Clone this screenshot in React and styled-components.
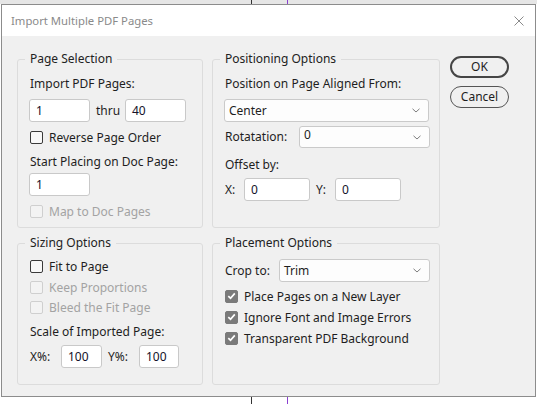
import React from "react";
import styled, { createGlobalStyle } from "styled-components";

const Global = createGlobalStyle`
  html, body {
    margin: 0;
    padding: 0;
  }
  body {
    width: 537px;
    height: 404px;
    overflow: hidden;
    font-family: "Noto Sans", "Open Sans", sans-serif;
    background:
      linear-gradient(#333, #333) 251px 0 / 1px 100% no-repeat,
      linear-gradient(#8a3fd1, #8a3fd1) 287px 0 / 1px 100% no-repeat,
      linear-gradient(#e6e6e6, #e6e6e6) 0 0 / 100% 4px no-repeat,
      #ffffff;
  }
`;

const Dialog = styled.div`
  margin: 4px 0 0 1px;
  width: 533px;
  height: 391px;
  border: 1px solid #8c8c8c;
  display: flex;
  flex-direction: column;
  background: #f0f0f0;
`;

const TitleBar = styled.div`
  height: 31px;
  flex: none;
  background: #fff;
  display: flex;
  align-items: center;
  justify-content: space-between;
  padding: 0 10px 0 9px;
  font-size: 11.3px;
  color: #8a8a8a;
`;

const Close = styled.button`
  border: none;
  background: none;
  padding: 0;
  width: 12px;
  height: 12px;
  display: flex;
  align-items: center;
  justify-content: center;
  svg {
    display: block;
  }
`;

const Body = styled.div`
  flex: 1;
  display: grid;
  grid-template-columns: 186px 228px 60px;
  grid-template-rows: 178px 151px;
  column-gap: 9px;
  row-gap: 6px;
  padding: 14px 0 0 15px;
`;

const Group = styled.fieldset`
  margin: 0;
  min-width: 0;
  padding: 0 12px;
  border: 1px solid #dcdcdc;
  border-radius: 3px;
  display: flex;
  flex-direction: column;
  font-size: 12px;
  color: #1e1e1e;
`;

const Legend = styled.legend`
  padding: 0 5px;
  margin-left: -5px;
  font-size: 12px;
  line-height: 18px;
  color: #222;
`;

const Label = styled.div`
  height: 18px;
  line-height: 18px;
  margin-top: ${(p) => p.$mt || 0}px;
  white-space: nowrap;
  color: ${(p) => (p.$disabled ? "#a3a3a3" : "#1e1e1e")};
`;

const Row = styled.div`
  display: flex;
  align-items: center;
  margin-top: ${(p) => p.$mt || 0}px;
`;

const RowLabel = styled.span`
  flex: none;
  width: ${(p) => p.$w}px;
  margin-left: ${(p) => p.$ml || 0}px;
  white-space: nowrap;
  line-height: 18px;
`;

const Input = styled.div`
  box-sizing: border-box;
  width: ${(p) => p.$w}px;
  height: 23px;
  margin-left: ${(p) => p.$ml || 0}px;
  flex: none;
  background: #fff;
  border: 1px solid #c9c9c9;
  border-radius: 3px;
  padding: 0 6px;
  line-height: 21px;
  color: #14122a;
`;

const Select = styled.div`
  box-sizing: border-box;
  width: ${(p) => p.$w}px;
  height: ${(p) => p.$h || 23}px;
  margin-left: ${(p) => p.$ml || 0}px;
  flex: none;
  background: #fdfdfd;
  border: 1px solid #cacaca;
  border-radius: 3px;
  padding: 0 8px 0 4px;
  display: flex;
  align-items: ${(p) => (p.$top ? "flex-start" : "center")};
  justify-content: space-between;
  line-height: ${(p) => (p.$top ? "15px" : "21px")};
  color: #1e1e1e;
  svg {
    align-self: center;
    flex: none;
  }
`;

const Check = styled.label`
  display: flex;
  align-items: center;
  gap: 6px;
  height: 20px;
  margin-top: ${(p) => p.$mt || 0}px;
  white-space: nowrap;
  color: ${(p) => (p.$disabled ? "#a3a3a3" : "#1e1e1e")};
`;

const Box = styled.span`
  box-sizing: border-box;
  width: 13px;
  height: 13px;
  flex: none;
  border-radius: 2px;
  border: 1px solid ${(p) => (p.$checked ? "#7a7a7a" : p.$disabled ? "#cfcfcf" : "#3a3a3a")};
  background: ${(p) => (p.$checked ? "#7a7a7a" : p.$disabled ? "#f3f3f3" : "#f8f8f8")};
  display: flex;
  align-items: center;
  justify-content: center;
`;

const Buttons = styled.div`
  grid-row: 1;
  grid-column: 3;
  margin: 6px 0 0 1px;
  display: flex;
  flex-direction: column;
  gap: 8px;
  align-items: flex-start;
`;

const Button = styled.button`
  box-sizing: border-box;
  width: 59px;
  height: 22px;
  padding: 0;
  border-radius: 11px;
  border: ${(p) => (p.$primary ? "2px solid #454545" : "1px solid #555")};
  background: #f0f0f0;
  font-family: inherit;
  font-size: 12px;
  color: #1e1e1e;
  line-height: 1;
`;

const Chevron = () => (
  <svg width="8" height="5" viewBox="0 0 8 5">
    <path d="M0.5 0.8 L4 4 L7.5 0.8" fill="none" stroke="#7d7d7d" strokeWidth="1" />
  </svg>
);

const Checkbox = ({ checked, disabled, mt, children }) => (
  <Check $disabled={disabled && !checked} $mt={mt}>
    <Box $checked={checked} $disabled={disabled}>
      {checked && (
        <svg width="9" height="8" viewBox="0 0 9 8">
          <path d="M1.3 4.2 L3.5 6.2 L7.8 1.4" fill="none" stroke="#fff" strokeWidth="1.7" />
        </svg>
      )}
    </Box>
    {children}
  </Check>
);

export default function App() {
  return (
    <>
      <Global />
      <Dialog>
        <TitleBar>
          <span>Import Multiple PDF Pages</span>
          <Close aria-label="Close">
            <svg width="10" height="10" viewBox="0 0 10 10">
              <path d="M0.5 0.5 L9.5 9.5 M9.5 0.5 L0.5 9.5" stroke="#8a8a8a" strokeWidth="1" />
            </svg>
          </Close>
        </TitleBar>
        <Body>
          <Group>
            <Legend>Page Selection</Legend>
            <Label $mt={7}>Import PDF Pages:</Label>
            <Row $mt={6}>
              <Input $w={61} $ml={-1}>1</Input>
              <RowLabel $w={35} $ml={6}>thru</RowLabel>
              <Input $w={61} $ml={-6}>40</Input>
            </Row>
            <Checkbox mt={5}>Reverse Page Order</Checkbox>
            <Label $mt={6}>Start Placing on Doc Page:</Label>
            <Row $mt={2}>
              <Input $w={61} $ml={-1}>1</Input>
            </Row>
            <Checkbox mt={5} disabled>Map to Doc Pages</Checkbox>
          </Group>

          <Group>
            <Legend>Positioning Options</Legend>
            <Label $mt={7}>Position on Page Aligned From:</Label>
            <Row $mt={6}>
              <Select $w={205} $ml={-1}>
                Center
                <Chevron />
              </Select>
            </Row>
            <Row $mt={4}>
              <RowLabel $w={74}>Rotatation:</RowLabel>
              <Select $w={131} $h={22} $top>
                0
                <Chevron />
              </Select>
            </Row>
            <Label $mt={8}>Offset by:</Label>
            <Row $mt={4}>
              <RowLabel $w={19}>X:</RowLabel>
              <Input $w={66}>0</Input>
              <RowLabel $w={19} $ml={6}>Y:</RowLabel>
              <Input $w={66}>0</Input>
            </Row>
          </Group>

          <Buttons>
            <Button $primary>OK</Button>
            <Button>Cancel</Button>
          </Buttons>

          <Group>
            <Legend>Sizing Options</Legend>
            <Checkbox mt={4}>Fit to Page</Checkbox>
            <Checkbox mt={1} disabled>Keep Proportions</Checkbox>
            <Checkbox mt={0} disabled>Bleed the Fit Page</Checkbox>
            <Label $mt={6}>Scale of Imported Page:</Label>
            <Row $mt={4}>
              <RowLabel $w={31}>X%:</RowLabel>
              <Input $w={41}>100</Input>
              <RowLabel $w={31} $ml={6}>Y%:</RowLabel>
              <Input $w={40}>100</Input>
            </Row>
          </Group>

          <Group>
            <Legend>Placement Options</Legend>
            <Row $mt={7}>
              <RowLabel $w={54}>Crop to:</RowLabel>
              <Select $w={151}>
                Trim
                <Chevron />
              </Select>
            </Row>
            <Checkbox mt={4} checked disabled>Place Pages on a New Layer</Checkbox>
            <Checkbox mt={1} checked disabled>Ignore Font and Image Errors</Checkbox>
            <Checkbox mt={1} checked disabled>Transparent PDF Background</Checkbox>
          </Group>
        </Body>
      </Dialog>
    </>
  );
}
